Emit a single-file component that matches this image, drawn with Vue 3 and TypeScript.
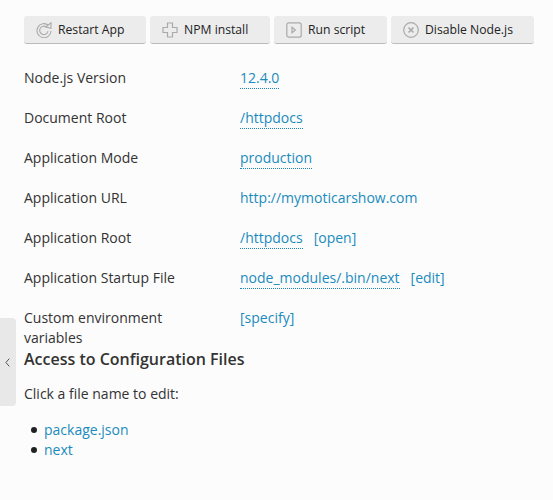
<script setup lang="ts">
interface Part { text: string; dotted?: boolean }
interface Row { label: string; parts: Part[] }
const rows: Row[] = [
  { label: 'Node.js Version', parts: [{ text: '12.4.0', dotted: true }] },
  { label: 'Document Root', parts: [{ text: '/httpdocs', dotted: true }] },
  { label: 'Application Mode', parts: [{ text: 'production', dotted: true }] },
  { label: 'Application URL', parts: [{ text: 'http://mymoticarshow.com' }] },
  { label: 'Application Root', parts: [{ text: '/httpdocs', dotted: true }, { text: '[open]' }] },
  { label: 'Application Startup File', parts: [{ text: 'node_modules/.bin/next', dotted: true }, { text: '[edit]' }] },
  { label: 'Custom environment variables', parts: [{ text: '[specify]' }] },
]
const files = ['package.json', 'next']
</script>

<template>
  <div class="page">
    <div class="side-tab">
      <svg width="5" height="9" viewBox="0 0 5 9"><path d="M4.300 .6 .9 4.500 4.300 8.400" fill="none" stroke="#555" stroke-width="1" /></svg>
    </div>
    <div class="toolbar">
      <button class="btn b1">
        <svg width="16" height="16" viewBox="0 0 16 16" fill="none" stroke="#aaa" stroke-width="1.1">
          <path d="M12.600 3.400A7 7 0 1 0 15 9" />
          <path d="M10.700 5.300A4.200 4.200 0 1 0 12 9" />
          <path d="M9.800 5 15 .8V6.200Z" fill="#ececec" />
        </svg>
        Restart App
      </button>
      <button class="btn b2">
        <svg width="16" height="16" viewBox="0 0 16 16" fill="none" stroke="#aaa" stroke-width="1.2">
          <path d="M5.500 1h5v4.500H15v5h-4.500V15h-5v-4.500H1v-5h4.500z" />
        </svg>
        NPM install
      </button>
      <button class="btn b3">
        <svg width="16" height="16" viewBox="0 0 16 16" fill="none" stroke="#aaa" stroke-width="1.2">
          <rect x=".8" y=".8" width="14.400" height="14.400" rx="2" />
          <path d="M6 5.200v5.600l3.400-2.800z" />
        </svg>
        Run script
      </button>
      <button class="btn b4">
        <svg width="16" height="16" viewBox="0 0 16 16" fill="none" stroke="#aaa" stroke-width="1.2">
          <circle cx="8" cy="8" r="7.300" />
          <path d="M5.500 5.500l5 5M10.500 5.500l-5 5" stroke-width="1.600" />
        </svg>
        Disable Node.js
      </button>
    </div>
    <div class="info">
      <div v-for="row in rows" :key="row.label" class="row">
        <div class="label">{{ row.label }}</div>
        <div class="value">
          <a v-for="part in row.parts" :key="part.text" class="link" :class="{ dotted: part.dotted }">{{ part.text }}</a>
        </div>
      </div>
    </div>
    <h3 class="heading">Access to Configuration Files</h3>
    <p class="hint">Click a file name to edit:</p>
    <ul class="files">
      <li v-for="file in files" :key="file"><a class="link">{{ file }}</a></li>
    </ul>
  </div>
</template>

<style>
html, body { margin: 0; background: #fcfcfc; }
</style>

<style scoped>
.page {
  position: relative;
  height: 500px;
  box-sizing: border-box;
  padding: 16px 0 0 24px;
  background: #fcfcfc;
  color: #333;
  font: 14px/20px "Open Sans", sans-serif;
  overflow: hidden;
}
.side-tab {
  position: absolute;
  left: 0;
  top: 318px;
  width: 16px;
  height: 88px;
  background: #e8e8e8;
  border-radius: 0 4px 4px 0;
  display: flex;
  align-items: center;
  justify-content: center;
  padding-right: 2px;
  box-sizing: border-box;
}
.toolbar { display: flex; gap: 4px; }
.btn {
  height: 28px;
  box-sizing: border-box;
  display: flex;
  align-items: center;
  gap: 6px;
  padding: 0 0 0 12px;
  border: 0;
  border-bottom: 1px solid #bbb;
  border-radius: 3px;
  background: #ececec;
  color: #222;
  font: 500 12.2px/20px "Open Sans", sans-serif;
  white-space: nowrap;
}
.b1 { width: 122px; }
.b2 { width: 120px; }
.b3 { width: 113px; }
.b4 { width: 143px; }
.info { margin-top: 14px; }
.row { display: flex; padding: 10px 0; }
.row:last-child { padding-bottom: 0; }
.label { width: 216px; padding-right: 60px; box-sizing: border-box; flex: none; }
.value { display: flex; gap: 11px; align-items: flex-start; }
.link { color: #1a8bbd; }
.dotted { border-bottom: 1px dotted #1a8bbd; margin-bottom: -1px; }
.heading { margin: 0; font-size: 16px; line-height: 22px; font-weight: 600; color: #333; }
.hint { margin: 14px 0 0; }
.files { margin: 16px 0 0; padding: 0 0 0 20px; list-style: none; }
.files li { position: relative; }
.files li::before {
  content: "";
  position: absolute;
  left: -13px;
  top: 7px;
  width: 6px;
  height: 6px;
  border-radius: 50%;
  background: #222;
}
</style>
